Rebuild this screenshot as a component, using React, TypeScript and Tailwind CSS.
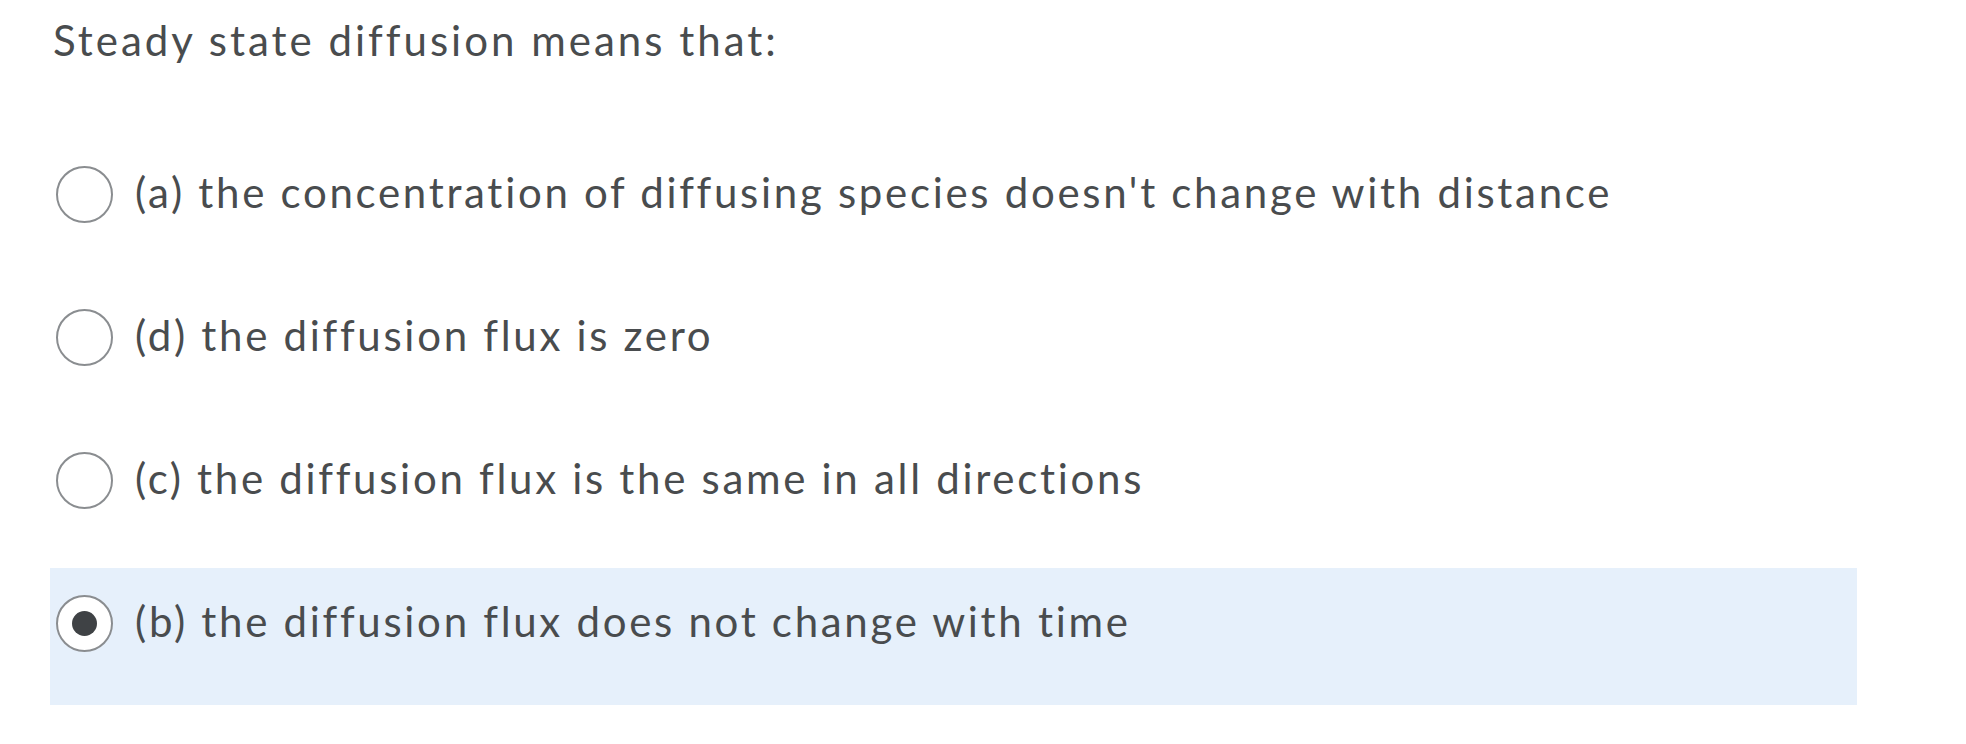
const options = [
  { id: "a", label: "(a) the concentration of diffusing species doesn't change with distance" },
  { id: "d", label: "(d) the diffusion flux is zero" },
  { id: "c", label: "(c) the diffusion flux is the same in all directions" },
  { id: "b", label: "(b) the diffusion flux does not change with time" },
];

const selected = "b";

function Radio({ checked }: { checked: boolean }) {
  return (
    <div className="flex h-[57px] w-[57px] shrink-0 items-center justify-center rounded-full border-[2px] border-[#8a8d90] bg-white">
      {checked && <div className="h-[25px] w-[25px] rounded-full bg-[#3f4245]"></div>}
    </div>
  );
}

export default function App() {
  return (
    <div
      className="min-h-[744px] w-full bg-white pl-[50px] pr-[109px] pt-[15px] text-[42px] leading-[1.2] text-[#494c4e]"
      style={{ fontFamily: "Lato, 'Open Sans', sans-serif" }}
    >
      <div className="pl-[3px] tracking-[3px]">Steady state diffusion means that:</div>

      <div className="mt-[74px] flex flex-col gap-[6px]">
        {options.map((opt) => {
          const checked = opt.id === selected;
          return (
            <div
              key={opt.id}
              className={`flex h-[137px] items-start pl-[6px] pt-[27px] ${checked ? "bg-[#e6f0fb]" : ""}`}
            >
              <div className="flex items-center gap-[22px]">
                <Radio checked={checked} />
                <span className="relative -top-[3px] tracking-[2.7px]">{opt.label}</span>
              </div>
            </div>
          );
        })}
      </div>
    </div>
  );
}
